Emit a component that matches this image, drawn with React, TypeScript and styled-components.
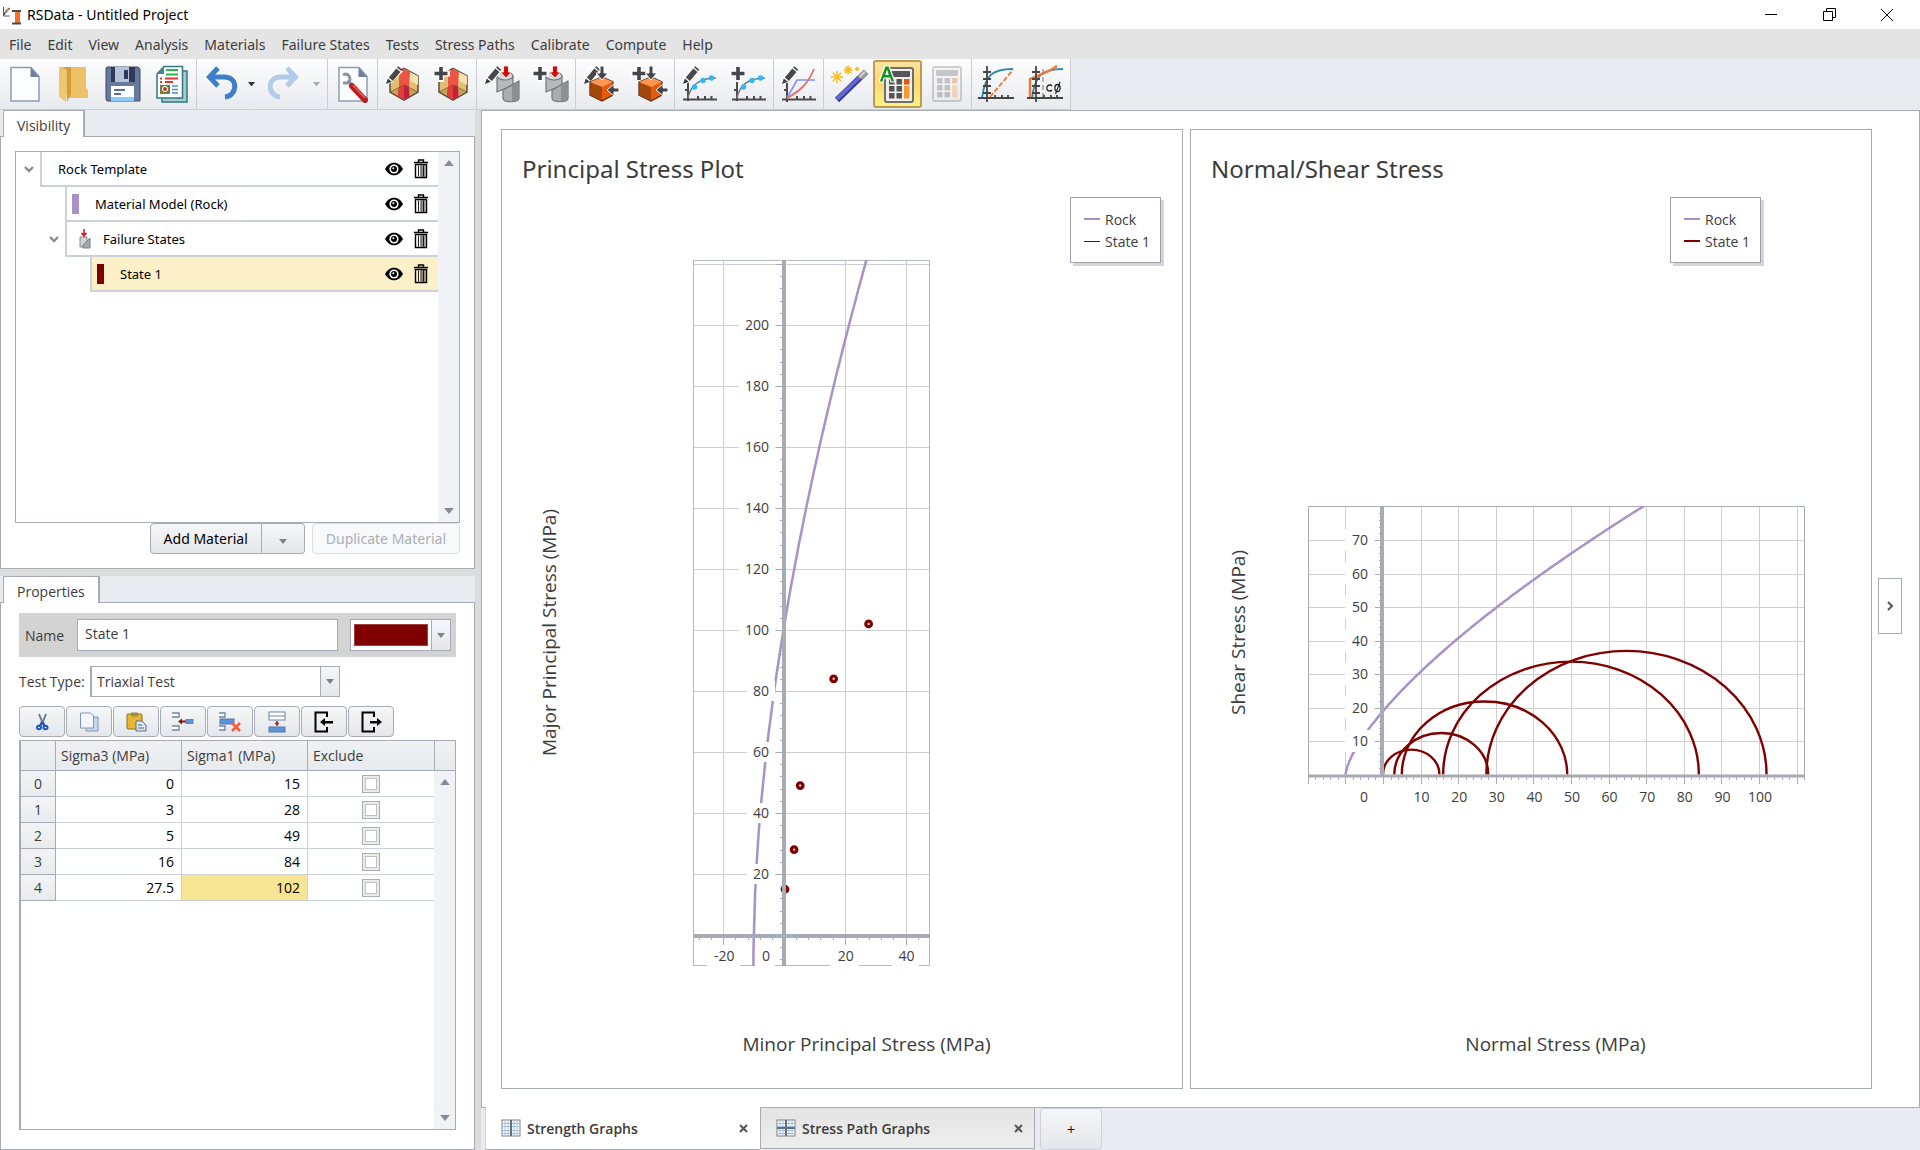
import React from "react";
import styled, { createGlobalStyle, css } from "styled-components";

const line = "#a6abb6";
const softLine = "#cdd1d9";
const strip = "#e8ebf0";
const ink = "#3c3c3c";
const maroon = "#800000";
const lilac = "#a892c6";
const wideFont = '"Noto Sans", "Open Sans", sans-serif';

const GlobalStyle = createGlobalStyle`
  *, *::before, *::after { box-sizing: border-box; }
  body { margin: 0; }
  body, button, input, select, table {
    font-family: "Open Sans", "Noto Sans", sans-serif;
    font-size: 14px;
    color: ${ink};
  }
`;

const Window = styled.div`
  display: flex;
  flex-direction: column;
  height: 100vh;
  background: #dcdcdc;
  overflow: hidden;
`;

const TitleBar = styled.header`
  display: flex;
  align-items: center;
  height: 29px;
  padding: 0 4px 0 2px;
  background: #fff;
`;

const WindowTitle = styled.h1`
  flex: 1;
  margin: 0 0 0 5px;
  font-family: ${wideFont};
  font-size: 14px;
  font-weight: 400;
  color: #000;
`;

const CaptionButton = styled.button`
  display: grid;
  place-items: center;
  width: 58px;
  height: 28px;
  padding: 0;
  border: 0;
  background: none;
`;

const MenuBar = styled.nav`
  display: flex;
  align-items: center;
  gap: 16px;
  height: 30px;
  padding: 0 9px;
  background: #e4e4e4;
`;

const MenuLink = styled.a`
  font-family: ${wideFont};
  color: ${ink};
  text-decoration: none;
  white-space: nowrap;
`;

const ToolBar = styled.div`
  display: flex;
  height: 51px;
  background: ${strip};
`;

const ToolGroup = styled.div`
  display: flex;
  align-items: center;
  border-right: 1px solid #c9cdd4;
  border-bottom: 1px solid #c9cdd4;
  background: linear-gradient(#fdfdfe, #e7eaee);
`;

const ToolButton = styled.button<{ $active?: boolean }>`
  display: grid;
  place-items: center;
  width: 49px;
  height: 48px;
  padding: 0;
  border: 2px solid transparent;
  border-radius: 3px;
  background: none;
  ${(p) =>
    p.$active &&
    css`
      border-color: #c09a4e;
      background: linear-gradient(#fce3a0, #fdd873 50%, #fff283);
    `}
`;

const MoreButton = styled.button<{ $dim?: boolean }>`
  display: grid;
  place-items: center;
  width: 16px;
  height: 48px;
  padding: 0 5px 0 0;
  border: 0;
  background: none;
  color: ${(p) => (p.$dim ? "#aaadb3" : "#333")};
`;

const Workspace = styled.div`
  display: flex;
  flex: 1;
  gap: 6px;
  min-height: 0;
`;

const Sidebar = styled.aside`
  display: flex;
  flex: 0 0 475px;
  flex-direction: column;
  gap: 7px;
`;

const Dock = styled.section<{ $grow?: boolean }>`
  display: flex;
  flex-direction: column;
  flex: ${(p) => (p.$grow ? "1" : "0 0 459px")};
  min-height: 0;
  background: ${strip};
`;

const DockTab = styled.h2`
  align-self: flex-start;
  height: 27px;
  margin: 0 0 -1px 3px;
  padding: 0 13px;
  border: 1px solid ${line};
  border-right-width: 2px;
  border-bottom: 0;
  background: #fff;
  font-size: 14px;
  font-weight: 400;
  line-height: 29px;
  z-index: 1;
`;

const DockBody = styled.div<{ $pad: string }>`
  display: flex;
  flex: 1;
  flex-direction: column;
  min-height: 0;
  padding: ${(p) => p.$pad};
  border: 1px solid ${line};
  background: #fff;
`;

const TreeBox = styled.div`
  display: flex;
  flex: 1;
  border: 1px solid ${line};
`;

const Tree = styled.ul`
  flex: 1;
  margin: 0;
  padding: 0;
  list-style: none;
`;

const TreeItem = styled.li<{ $depth: number }>`
  display: flex;
  height: 35px;
  padding-left: ${(p) => p.$depth * 25}px;
`;

const Twisty = styled.button`
  display: grid;
  place-items: center;
  width: 24px;
  padding: 0 0 0 2px;
  border: 0;
  background: none;
`;

const TreeRow = styled.div<{ $selected?: boolean }>`
  display: flex;
  flex: 1;
  align-items: center;
  padding: 0 10px 0 5px;
  border-left: 2px solid ${softLine};
  border-bottom: 2px solid ${softLine};
  background: ${(p) => (p.$selected ? "#fcf0c8" : "#fff")};
`;

const ColorChip = styled.span<{ $color: string }>`
  width: 7px;
  height: 20px;
  background: ${(p) => p.$color};
`;

const TreeLabel = styled.span<{ $gap: number }>`
  flex: 1;
  padding-left: ${(p) => p.$gap}px;
  font-family: ${wideFont};
  font-size: 13px;
  color: #000;
`;

const RowButton = styled.button`
  display: grid;
  place-items: center;
  margin-left: 11px;
  padding: 0;
  border: 0;
  background: none;
`;

const ScrollTrack = styled.div`
  display: flex;
  flex: 1;
  flex-direction: column;
  justify-content: space-between;
  align-items: center;
  width: 21px;
  padding: 8px 0;
  background: #f1f2f5;
  color: #858b98;
`;

const TreeActions = styled.div`
  display: flex;
  justify-content: flex-end;
  gap: 7px;
  height: 31px;
`;

const face = css`
  border: 1px solid ${line};
  background: linear-gradient(#f5f6f8, #e4e7ea);
`;

const SplitButton = styled.div`
  display: flex;
`;

const PushButton = styled.button<{ $side?: "left" | "right" }>`
  ${face}
  height: 31px;
  padding: 0 ${(p) => (p.$side === "right" ? 17 : 13)}px;
  border-radius: ${(p) =>
    p.$side === "left" ? "4px 0 0 4px" : p.$side === "right" ? "0 4px 4px 0" : "4px"};
  ${(p) => p.$side === "right" && "border-left: 0;"}
  color: ${(p) => (p.$side === "right" ? "#7d828d" : "#000")};
  font-family: ${wideFont};
  white-space: nowrap;

  &:disabled {
    border-color: #dcdfe3;
    background: #f8f9fa;
    color: #abafb5;
  }
`;

const NameBar = styled.div`
  display: flex;
  align-items: center;
  height: 44px;
  padding: 0 5px 0 6px;
  background: #d3d3d3;
`;

const NameLabel = styled.label`
  width: 52px;
`;

const NameInput = styled.input`
  flex: 1;
  min-width: 0;
  height: 32px;
  margin-right: 12px;
  padding: 0 7px 4px;
  border: 1px solid ${line};
  background: #fff;
`;

const ColorPicker = styled.button`
  display: flex;
  width: 101px;
  height: 32px;
  padding: 0;
  border: 1px solid ${line};
  background: #fff;
`;

const Swatch = styled.span`
  flex: 1;
  height: 22px;
  margin: 4px 3px;
  border: 1px solid #a04040;
  background: ${maroon};
`;

const DropFace = styled.span`
  ${face}
  display: grid;
  place-items: center;
  width: 19px;
  height: 100%;
  border-width: 0 0 0 1px;
  color: #7d828d;
`;

const TestRow = styled.div`
  display: flex;
  align-items: center;
  height: 31px;
  margin: 9px 0;
`;

const TestLabel = styled.label`
  width: 71px;
  white-space: nowrap;
`;

const SelectBox = styled.div`
  position: relative;
  width: 250px;
  height: 31px;
`;

const TypeSelect = styled.select`
  width: 100%;
  height: 100%;
  padding: 0 26px 0 5px;
  border: 1px solid ${line};
  border-left-width: 2px;
  border-radius: 0;
  background: #fff;
  appearance: none;
`;

const SelectArrow = styled.span`
  position: absolute;
  top: 1px;
  right: 1px;
  bottom: 1px;
  pointer-events: none;
`;

const GridTools = styled.div`
  display: flex;
  gap: 1px;
  margin-bottom: 3px;
`;

const GridTool = styled.button`
  ${face}
  display: grid;
  place-items: center;
  width: 46px;
  height: 31px;
  padding: 0;
  border-radius: 4px;
`;

const SheetBox = styled.div`
  display: flex;
  flex: 1;
  min-height: 0;
  border: 1px solid ${line};
  border-left-width: 2px;
`;

const SheetMain = styled.div`
  flex: 1;
`;

const Sheet = styled.table`
  width: 100%;
  table-layout: fixed;
  border-collapse: separate;
  border-spacing: 0;
`;

const HeadCell = styled.th<{ $w?: number }>`
  width: ${(p) => (p.$w ? `${p.$w}px` : "auto")};
  height: 30px;
  padding: 0 5px;
  border-right: 1px solid ${line};
  border-bottom: 1px solid ${line};
  background: linear-gradient(#eff1f3, #e8ebee);
  font-weight: 400;
  text-align: left;
  &:last-child { border-right: 0; }
`;

const IndexCell = styled.th`
  height: 26px;
  padding: 0;
  border-right: 1px solid ${line};
  border-bottom: 1px solid ${line};
  background: linear-gradient(#f2f4f6, #e9ecef);
  font-weight: 400;
`;

const ValueCell = styled.td<{ $selected?: boolean }>`
  height: 26px;
  padding: 0 7px;
  border-right: 1px solid ${softLine};
  border-bottom: 1px solid ${softLine};
  background: ${(p) => (p.$selected ? "#f8e594" : "#fff")};
  color: #000;
  line-height: 20px;
  text-align: right;
`;

const CheckCell = styled.td`
  height: 26px;
  padding: 0;
  border-bottom: 1px solid ${softLine};
  text-align: center;
`;

const Check = styled.input`
  display: block;
  width: 18px;
  height: 18px;
  margin: 0 auto;
  border: 1px solid #a9adb5;
  background: #fff;
  box-shadow: inset 0 0 0 2px #ececec, inset 0 0 0 3px #bfc1c6;
  appearance: none;
`;

const SheetScroll = styled.div`
  display: flex;
  flex-direction: column;
`;

const ScrollHead = styled.div`
  width: 21px;
  height: 30px;
  border-left: 1px solid ${line};
  border-bottom: 1px solid ${line};
  background: linear-gradient(#eff1f3, #e8ebee);
`;

const Main = styled.main`
  display: flex;
  flex: 1;
  flex-direction: column;
  min-width: 0;
  background: ${strip};
`;

const Canvas = styled.div`
  display: flex;
  flex: 1;
  align-items: center;
  min-height: 0;
  padding: 18px 17px 18px 19px;
  border: 1px solid ${line};
  background: #fff;
`;

const Cards = styled.div`
  display: flex;
  flex: 1;
  align-self: stretch;
  gap: 7px;
  margin-right: 6px;
`;

const Card = styled.section`
  display: flex;
  flex: 1;
  flex-direction: column;
  padding: 20px 10px 32px 20px;
  border: 1px solid ${line};
`;

const CardTitle = styled.h2`
  margin: 0 0 9px;
  font-family: ${wideFont};
  font-size: 24px;
  font-weight: 400;
  line-height: 38px;
`;

const PlotGrid = styled.div`
  display: grid;
  flex: 1;
  grid-template-columns: 24px 1fr;
  grid-template-rows: 1fr 24px;
  row-gap: 8px;
  padding-left: 15px;
`;

const AxisTitleY = styled.div`
  justify-self: center;
  align-self: center;
  margin-top: 44px;
  font-size: 19px;
  line-height: 24px;
  writing-mode: vertical-rl;
  transform: rotate(180deg);
  white-space: nowrap;
`;

const AxisTitleX = styled.div`
  grid-column: 2;
  font-size: 19px;
  line-height: 24px;
  text-align: center;
`;

const PlotArea = styled.div<{ $pad: string }>`
  position: relative;
  display: flex;
  align-items: center;
  justify-content: center;
  padding: ${(p) => p.$pad};
`;

const PlotSvg = styled.svg`
  display: block;
  font-size: 14px;
`;

const Legend = styled.ul<{ $right: number }>`
  position: absolute;
  top: 0;
  right: ${(p) => p.$right}px;
  width: 91px;
  margin: 0;
  padding: 10px 0 10px 13px;
  border: 1px solid #9da1ab;
  background: #fff;
  box-shadow: 3px 3px 0 #d6d6d8;
  list-style: none;
`;

const LegendRow = styled.li<{ $color: string; $thin?: boolean }>`
  display: flex;
  align-items: center;
  gap: 5px;
  height: 22px;
  &::before {
    content: "";
    width: 16px;
    height: ${(p) => (p.$thin ? 1 : 2)}px;
    background: ${(p) => p.$color};
  }
`;

const SideToggle = styled.button`
  display: grid;
  place-items: center;
  width: 24px;
  height: 56px;
  margin-bottom: 6px;
  padding: 0;
  border: 1px solid ${line};
  background: #fff;
`;

const TabStrip = styled.div`
  display: flex;
  height: 42px;
  padding-left: 4px;
`;

const DocTab = styled.div<{ $active?: boolean }>`
  display: flex;
  align-items: center;
  width: 275px;
  height: ${(p) => (p.$active ? 43 : 41)}px;
  margin-top: ${(p) => (p.$active ? -1 : 0)}px;
  padding: 0 10px 0 15px;
  border: 1px solid ${line};
  border-top: 0;
  background: ${(p) => (p.$active ? "#fff" : "linear-gradient(#e4e4e4, #eeeeee)")};
  ${(p) => p.$active && "border-color: #fff #fff " + line + " " + softLine + ";"}
`;

const TabName = styled.button`
  flex: 1;
  padding: 0 0 0 6px;
  border: 0;
  background: none;
  font-weight: 600;
  text-align: left;
`;

const TabClose = styled.button`
  display: grid;
  place-items: center;
  width: 12px;
  height: 16px;
  padding: 0;
  border: 0;
  background: none;
`;

const AddTab = styled.button`
  ${face}
  width: 62px;
  height: 42px;
  margin-left: 5px;
  padding: 0;
  border-color: ${softLine};
  border-radius: 4px;
  color: #000;
  font-size: 14px;
`;

/* ---------- small glyphs ---------- */

const Caret = ({ size = 8, up = false }: { size?: number; up?: boolean }) => (
  <svg width={size} height={size / 2 + 1} viewBox="0 0 8 5" aria-hidden="true">
    <path d={up ? "M0 5L4 0L8 5Z" : "M0 0L4 5L8 0Z"} fill="currentColor" />
  </svg>
);

const Chevron = () => (
  <svg width="10" height="7" viewBox="0 0 10 7" fill="none" stroke="#858b98" strokeWidth="2.400">
    <path d="M1 1L5 5L9 1" />
  </svg>
);

const Eye = () => (
  <svg width="18" height="14" viewBox="0 0 18 14">
    <path d="M0 7C3 2 6 .8 9 .8S15 2 18 7C15 12 12 13.2 9 13.2S3 12 0 7Z" fill="#000" />
    <circle cx="9" cy="7" r="4.6" fill="#fff" />
    <circle cx="9" cy="7" r="3" fill="#000" />
    <circle cx="8.4" cy="6.3" r="1" fill="#fff" />
  </svg>
);

const Trash = () => (
  <svg width="14" height="20" viewBox="0 0 14 20">
    <path d="M0 3.500h14M4.500 3V1h5v2" fill="none" stroke="#000" strokeWidth="1.400" />
    <path d="M1.500 5.500h11V18.500H1.500Z" fill="none" stroke="#000" strokeWidth="1.400" />
    <path d="M4.500 6.500v11M7 6.500v11M9.500 6.500v11" stroke="#222" strokeWidth="1" />
    <path d="M7.500 6h4v12h-4Z" fill="#000" opacity=".4" />
  </svg>
);

const AppLogo = () => (
  <svg width="20" height="20" viewBox="0 0 20 20" fill="none">
    <path d="M1.500 2v9h6M2 10L8 3M2 10C3 6 5 4 7 3" stroke="#555" strokeWidth="1" />
    <path d="M4 7l2-3 2-1" stroke="#f26a1b" strokeDasharray="2 1" />
    <path d="M13 7h5v11h-5z" fill="#fb6e1e" />
    <path d="M10 6h9M10 18.500h9" stroke="#4c4c4c" strokeWidth="2" />
  </svg>
);

/* ---------- toolbar icons ---------- */

const Icon = ({ children }: { children: React.ReactNode }) => (
  <svg width="38" height="38" viewBox="0 0 38 38" fill="none" aria-hidden="true">
    {children}
  </svg>
);

const Pencil = () => (
  <g>
    <path d="M1 20l2-7L13 1.500l6 5L8 17.500Z" fill="#fff" />
    <path d="M2 19l1.800-5.500 4 3.200Z" fill="#3d3d3d" />
    <path d="M4.800 12.500l7.500-9 4.200 3.500-7.600 9Z" fill="#484848" />
    <path d="M13 2.600l1.200-1.400 4.200 3.500-1.200 1.400Z" fill="#484848" />
  </g>
);

const Plus = () => (
  <g>
    <path d="M8 0v17M-1 8.500h18" stroke="#fff" strokeWidth="6" />
    <path d="M8 2v13M1.500 8.500h13" stroke="#43454c" strokeWidth="3.600" />
  </g>
);

const RedArrow = ({ x = 23 }: { x?: number }) => (
  <path d={`M${x - 2.500} 1h5v6h3l-5.500 6l-5.500-6h3Z`} fill="#d40b0b" stroke="#fff" strokeWidth=".8" />
);

const Hexagon = () => (
  <g strokeLinejoin="round">
    <path d="M20 3.500L34 11V27L20 35L6 27V11Z" fill="#e2bd72" stroke="#5a4a3a" strokeWidth="1.500" />
    <path d="M20 4L34 11V20L20 13Z" fill="#f3e2b0" />
    <path d="M6.500 26.500L20 20L33.500 26.500L20 34.500Z" fill="#c9a055" />
    <path d="M15 6L20 4L26 7L25 21L15 22Z" fill="#ee5443" />
    <path d="M15 22L20 20L25 21L25.500 31.500L20 34.500L14 31Z" fill="#c4203a" />
    <path d="M15 22L20 20V34.500L14 31Z" fill="#e23c3c" />
    <path d="M6 27L20 20L34 27" stroke="#7a5c32" strokeWidth=".7" />
  </g>
);

const Cylinder = () => (
  <g stroke="#737778" strokeWidth="1.200" strokeLinejoin="round">
    <path d="M14 11V27L30 20V11Z" fill="#b5b9ba" />
    <ellipse cx="22" cy="11" rx="8" ry="4" fill="#d7d9da" />
    <path d="M20 25L36 16V33C36 38 20 38 20 33Z" fill="#a9adae" />
    <path d="M29 21L35.500 17V33C35 35 33 36 29 36Z" fill="#8b9091" stroke="none" />
  </g>
);

const Cube = () => (
  <g>
    <path d="M8 17L20 12L31 17V30L20 36L8 30Z" fill="#e65a0a" stroke="#5f2d0e" strokeWidth="1.300" />
    <path d="M8 17L20 12L31 17L20 22Z" fill="#fb9552" />
    <path d="M8.500 17.500L20 22V35.500L8.500 30Z" fill="#a5460c" />
    <path d="M18 1h4v7h4l-6 7l-6-7h4Z" fill="#43454c" stroke="#fff" strokeWidth="1" />
    <path d="M25 25l7-6v4h5v4h-5v4Z" fill="#43454c" stroke="#fff" strokeWidth="1" />
  </g>
);

const Points = () => (
  <g>
    <path d="M7 15v21M2 34.500h34M17 31v3M24 31v3M30.500 31v3M4 25h3" stroke="#4a4a4a" strokeWidth="2" />
    <path d="M7 33Q11 13 35 13" stroke="#777" strokeWidth="1.500" />
    <circle cx="13.500" cy="22" r="2.700" fill="#2fb9fb" />
    <circle cx="22" cy="15.500" r="2.700" fill="#2fb9fb" />
    <circle cx="30.500" cy="13" r="2.700" fill="#2fb9fb" />
  </g>
);

const Calculator = ({ dim = false }: { dim?: boolean }) => (
  <g opacity={dim ? 0.3 : 1}>
    <rect x="5" y="2" width="28" height="34" rx="2" fill="#eeeeee" stroke="#6e6e6e" strokeWidth="2" />
    <rect x="8" y="5" width="22" height="6" rx="1" fill="#555" />
    {[13, 20, 27].map((y) => (
      <g key={y}>
        <rect x="9" y={y} width="5.500" height="5.500" fill="#555" />
        <rect x="16.500" y={y} width="5.500" height="5.500" fill="#555" />
        <rect x="24" y={y} width="5.500" height={y === 20 ? 8 : 5.500} fill={y === 13 ? "#e2580c" : "#f49a33"} />
      </g>
    ))}
  </g>
);

const GraphAxes = () => (
  <path d="M9 1v36M0 33h36M5 7h8M5 14h8M5 21h8M5 28h8M17 30v3M24 30v3M30 30v3" stroke="#454545" strokeWidth="1.800" />
);

const NewIcon = () => (
  <Icon>
    <path d="M5 2.500h20l8 9V36H5Z" fill="#fcfdfe" stroke="#8c9cb8" strokeWidth="1.500" />
    <path d="M24.500 2v10H33Z" fill="#6f819f" />
  </Icon>
);

const OpenIcon = () => (
  <Icon>
    <path d="M4 2h27v21l2 2v8H12Z" fill="#edc168" />
    <path d="M8 2h8v27l-4 8V5Z" fill="#d69b3c" />
    <path d="M4 2l7 4v31l-7-5Z" fill="#f0c670" />
  </Icon>
);

const SaveIcon = () => (
  <Icon>
    <path d="M3 2h31l2 2v32H3L2 34V3Z" fill="#667a9e" stroke="#3c4a69" />
    <rect x="7" y="2" width="24" height="15" fill="#30395a" />
    <rect x="11" y="2" width="14" height="15" fill="#b5c3dd" />
    <rect x="20" y="5" width="4" height="9" fill="#30395a" />
    <rect x="7" y="21" width="23" height="15" fill="#fff" />
    <rect x="7" y="32" width="23" height="4" fill="#8dcaf7" />
    <path d="M10 25h11M10 29h7" stroke="#5d7090" strokeWidth="2" />
  </Icon>
);

const ReportIcon = () => (
  <Icon>
    <path d="M9 6h25v31H9Z" fill="#a5cdd0" stroke="#33777f" strokeWidth="1.500" />
    <path d="M11 1.500h18.500V33H4V9Z" fill="#fff" stroke="#33777f" strokeWidth="1.500" />
    <path d="M4 9L11 1.500V9Z" fill="#3d8b8a" />
    <path d="M13 5h12M13 9.500h12" stroke="#27b648" strokeWidth="1.800" />
    <path d="M7 13.500h2M12 13.500h13M7 17h2M12 17h8" stroke="#ea3434" strokeWidth="1.800" />
    <rect x="7" y="20" width="10" height="9" fill="#7b7c36" />
    <path d="M12 21v6M9 24h6" stroke="#fff" strokeWidth="3" />
    <path d="M12 22v4M10 24h4" stroke="#d02020" strokeWidth="1.600" />
    <path d="M19 21h6M19 24.500h6M19 28h6" stroke="#4a8fe0" strokeWidth="1.500" />
  </Icon>
);

const TurnArrow = ({ flip = false, color }: { flip?: boolean; color: string }) => (
  <Icon>
    <g transform={flip ? "matrix(-1 0 0 1 34 0)" : undefined}>
      <path d="M8 12H22C36 13 34 31 22 32" stroke={color} strokeWidth="5" />
      <path d="M15 3L6.500 12L15 21" stroke={color} strokeWidth="5" />
    </g>
  </Icon>
);

const WrenchIcon = () => (
  <Icon>
    <path d="M5 2.500h20l8 9V36H5Z" fill="#fcfdfe" stroke="#8c9cb8" strokeWidth="1.500" />
    <path d="M24.500 2v10H33Z" fill="#6f819f" />
    <path d="M9 10c6-3 9 4 5 8h-5M14 15l6 8" stroke="#8f9499" strokeWidth="3" />
    <path d="M18 21L31 35" stroke="#b81f1f" strokeWidth="6" strokeLinecap="round" />
    <path d="M19 20L31 33" stroke="#e4504b" strokeWidth="2" />
  </Icon>
);

const BlendIcon = () => (
  <Icon>
    <path d="M7 17v20M2 34.500h34M17 31v3M24 31v3M30.500 31v3M4 25h3" stroke="#4a4a4a" strokeWidth="2" />
    <path d="M7 33L17 15H35" stroke="#7d93f5" strokeWidth="1.600" />
    <path d="M7 33C20 26 28 19 34 4" stroke="#e5706c" strokeWidth="1.800" />
    <Pencil />
  </Icon>
);

const Star = ({ x, y, r }: { x: number; y: number; r: number }) => (
  <path
    d={`M${x} ${y - r}v${2 * r}M${x - r} ${y}h${2 * r}M${x - r * 0.7} ${y - r * 0.7}l${r * 1.4} ${r * 1.4}M${x + r * 0.7} ${y - r * 0.7}l${-r * 1.4} ${r * 1.4}`}
    stroke="#f9be1d"
    strokeWidth="1.500"
  />
);

const WandIcon = () => (
  <Icon>
    <path d="M7 35L36 7" stroke="#3a3a8a" strokeWidth="6" />
    <path d="M7 34L31 11" stroke="#6667d8" strokeWidth="3.500" />
    <path d="M30 13L36 7" stroke="#9a9a9a" strokeWidth="6" />
    <path d="M29.500 12L35 6.500" stroke="#d8d8d8" strokeWidth="2" />
    <Star x={7} y={12} r={6} />
    <Star x={18} y={5} r={4.5} />
    <Star x={27} y={4} r={2} />
  </Icon>
);

const AutoCalcIcon = () => (
  <Icon>
    <g transform="translate(1 1)">
      <Calculator />
    </g>
    <path d="M0 17L6 1h4l6 16h-4l-1.200-4H5.200L4 17Z" fill="#12911c" stroke="#fff" strokeWidth="1.200" />
    <path d="M6.200 10h3.600L8 4.500Z" fill="#fff" />
  </Icon>
);

const EnvelopeIcon = () => (
  <Icon>
    <path d="M4 33C7 10 14 4 35 4" stroke="#2f87ab" strokeWidth="1.800" />
    <path d="M12 32L35 5" stroke="#f07a3a" strokeWidth="1.800" strokeDasharray="5 2" />
    <GraphAxes />
  </Icon>
);

const CohesionIcon = () => (
  <Icon>
    <path d="M5 33C8 10 15 4 36 4" stroke="#2f87ab" strokeWidth="1.800" />
    <path d="M3 32V14L22 6L30 1" stroke="#f07a3a" strokeWidth="2.500" />
    <path d="M16 4v28" stroke="#777" strokeDasharray="5 3" />
    <GraphAxes />
    <path d="M25 21a3 3 0 1 0 0 4" stroke="#222" strokeWidth="1.300" />
    <ellipse cx="30.500" cy="23" rx="2.600" ry="3.500" stroke="#222" strokeWidth="1.300" />
    <path d="M28.500 29L33 17" stroke="#222" strokeWidth="1.200" />
  </Icon>
);

const toolGroups: { label: string; icon: React.ReactNode; active?: boolean; more?: "on" | "dim" }[][] = [
  [
    { label: "New", icon: <NewIcon /> },
    { label: "Open", icon: <OpenIcon /> },
    { label: "Save", icon: <SaveIcon /> },
    { label: "Report", icon: <ReportIcon /> },
  ],
  [
    { label: "Undo", icon: <TurnArrow color="#3d7ec9" />, more: "on" },
    { label: "Redo", icon: <TurnArrow flip color="#b1cbe8" />, more: "dim" },
  ],
  [{ label: "Project settings", icon: <WrenchIcon /> }],
  [
    { label: "Edit material", icon: <Icon><Hexagon /><Pencil /></Icon> },
    { label: "Add material", icon: <Icon><Hexagon /><Plus /></Icon> },
  ],
  [
    { label: "Edit failure state", icon: <Icon><Cylinder /><RedArrow /><Pencil /></Icon> },
    { label: "Add failure state", icon: <Icon><Cylinder /><Plus /><RedArrow /></Icon> },
  ],
  [
    { label: "Edit test", icon: <Icon><Pencil /><Cube /></Icon> },
    { label: "Add test", icon: <Icon><Plus /><Cube /></Icon> },
  ],
  [
    { label: "Edit stress path", icon: <Icon><Points /><Pencil /></Icon> },
    { label: "Add stress path", icon: <Icon><Points /><Plus /></Icon> },
  ],
  [{ label: "Edit calibration", icon: <BlendIcon /> }],
  [
    { label: "Wizard", icon: <WandIcon /> },
    { label: "Auto compute", icon: <AutoCalcIcon />, active: true },
    { label: "Compute", icon: <Icon><Calculator dim /></Icon> },
  ],
  [
    { label: "Envelope", icon: <EnvelopeIcon /> },
    { label: "Cohesion and friction", icon: <CohesionIcon /> },
  ],
];

/* ---------- sheet tool icons ---------- */

const Small = ({ children }: { children: React.ReactNode }) => (
  <svg width="22" height="22" viewBox="0 0 22 22" fill="none" aria-hidden="true">
    {children}
  </svg>
);

const sheetTools: { label: string; icon: React.ReactNode }[] = [
  {
    label: "Cut",
    icon: (
      <Small>
        <path d="M8 3l4 10M15 3l-4 10" stroke="#6d7f98" strokeWidth="2" />
        <path d="M11 11l-2 4M11.500 11l2 4" stroke="#2457b8" strokeWidth="2.500" />
        <ellipse cx="8" cy="16.500" rx="2" ry="1.800" stroke="#2457b8" strokeWidth="2" />
        <ellipse cx="14.500" cy="16.500" rx="2" ry="1.800" stroke="#2457b8" strokeWidth="2" />
      </Small>
    ),
  },
  {
    label: "Copy",
    icon: (
      <Small>
        <path d="M8 6h12v14H8Z" fill="#c9d8ec" stroke="#8094b8" />
        <path d="M2.500 2h10l3 3v12h-13Z" fill="#f3f6fb" stroke="#8094b8" />
      </Small>
    ),
  },
  {
    label: "Paste",
    icon: (
      <Small>
        <rect x="2" y="3" width="15" height="15" rx="1" fill="#e9b62f" stroke="#94701c" />
        <rect x="6" y="1.500" width="7" height="4" fill="#a38b4c" />
        <path d="M11 10h6l4 4v6H11Z" fill="#d9e3f0" stroke="#5c6e8b" />
        <path d="M13 14h4M13 17h6" stroke="#5c6e8b" />
      </Small>
    ),
  },
  {
    label: "Insert row",
    icon: (
      <Small>
        <path d="M0 2h7v4H0M0 15h7v4H0" fill="#fff" stroke="#6e84a5" strokeWidth="1.300" />
        <path d="M6 10.500l4-3v2h4v2h-4v2Z" fill="#8b1010" />
        <rect x="14" y="8.500" width="7" height="4" fill="#5b93df" stroke="#6e84a5" />
      </Small>
    ),
  },
  {
    label: "Delete row",
    icon: (
      <Small>
        <path d="M0 2h6v4H0M0 15h6v4H0" fill="#fff" stroke="#6e84a5" strokeWidth="1.300" />
        <rect x="1" y="8" width="14" height="5" fill="#5b93df" stroke="#5a78a8" />
        <path d="M13 12l8 8M21 12l-8 8" stroke="#ff5a3c" strokeWidth="2.500" />
      </Small>
    ),
  },
  {
    label: "Append row",
    icon: (
      <Small>
        <rect x="3" y="1" width="16" height="8" fill="#fff" stroke="#6e84a5" />
        <path d="M3 5h16" stroke="#6e84a5" />
        <path d="M11 15v-5M9 12.500h4" stroke="#b01515" strokeWidth="1.500" />
        <rect x="3" y="16" width="16" height="5" fill="#5b93df" stroke="#5a78a8" />
      </Small>
    ),
  },
  {
    label: "Import",
    icon: (
      <Small>
        <path d="M14 6V1.500H2.500V20.500H14V16" stroke="#000" strokeWidth="2" />
        <path d="M7 11l5-4v3h8v2.400h-8V15Z" fill="#000" />
      </Small>
    ),
  },
  {
    label: "Export",
    icon: (
      <Small>
        <path d="M14 6V1.500H2.500V20.500H14V16" stroke="#000" strokeWidth="2" />
        <path d="M22 11l-5-4v3h-7v2.400h7V15Z" fill="#000" />
      </Small>
    ),
  },
];

const LayoutIcon = ({ rows }: { rows: number }) => (
  <svg width="20" height="18" viewBox="0 0 20 18" fill="none" aria-hidden="true">
    <rect x="1" y="1" width="18" height="16" fill="#fff" stroke="#7b7f86" />
    <path d="M4 1v16M7 1v16M13 1v16M16 1v16M1 4.500h18M1 7.500h18M1 11.500h18M1 14.500h18" stroke="#9fc0e2" />
    <path d="M10 1v16" stroke="#6b6f75" strokeWidth="2" />
    {rows > 1 && <path d="M1 9h18" stroke="#6b6f75" strokeWidth="2" />}
  </svg>
);

/* ---------- data ---------- */

type Sample = { sigma3: number; sigma1: number };

const samples: Sample[] = [
  { sigma3: 0, sigma1: 15 },
  { sigma3: 3, sigma1: 28 },
  { sigma3: 5, sigma1: 49 },
  { sigma3: 16, sigma1: 84 },
  { sigma3: 27.5, sigma1: 102 },
];

const toPath = (points: [number, number][]) =>
  points.map(([x, y], i) => `${i ? "L" : "M"}${x.toFixed(1)} ${y.toFixed(1)}`).join("");

const range = (from: number, to: number, step: number) => {
  const out: number[] = [];
  for (let v = from; v <= to; v += step) out.push(v);
  return out;
};

/* Principal stress: Hoek-Brown envelope with the measured samples. */
const PrincipalPlot = () => {
  const w = 237;
  const h = 706;
  const X = (v: number) => 91 + v * 3.04;
  const Y = (v: number) => 675 - v * 3.05;
  const curve = toPath([
    [X(-10.05), h],
    ...range(-10.02, 28, 0.5).map((s): [number, number] => [X(s), Y(s + Math.sqrt(Math.max(0, 10201 + 1015 * s)))]),
  ]);
  return (
    <PlotSvg width={w} height={h} viewBox={`0 0 ${w} ${h}`} role="img" aria-label="Principal stress plot">
      <defs>
        <clipPath id="principal-clip"><rect width={w} height={h} /></clipPath>
      </defs>
      <g stroke="#cfcfd1" strokeWidth="1">
        {[-20, 20, 40].map((v) => <path key={v} d={`M${Math.round(X(v)) + 0.5} 0V${h}`} />)}
        {range(20, 220, 20).map((v) => <path key={v} d={`M0 ${Math.round(Y(v)) + 0.5}H${w}`} />)}
      </g>
      <rect x=".5" y=".5" width={w - 1} height={h - 1} fill="none" stroke="#b4b8c0" />
      <path d={curve} fill="none" stroke={lilac} strokeWidth="2.500" clipPath="url(#principal-clip)" />
      <g fill="#fff">
        {range(20, 200, 20).map((v) => (
          <rect key={v} x={v < 100 ? 54 : 46} y={Y(v) - 10} width={v < 100 ? 28 : 36} height="20" />
        ))}
        <rect x="14" y="686" width="33" height="20" />
        <rect x="62" y="686" width="20" height="20" />
        <rect x="137" y="686" width="29" height="20" />
        <rect x="199" y="686" width="27" height="20" />
      </g>
      {samples.map((s) => (
        <circle key={s.sigma3} cx={X(s.sigma3) + 1} cy={Y(s.sigma1)} r="2.800" fill="#e6cccc" stroke={maroon} strokeWidth="3.200" />
      ))}
      <g stroke={line}>
        <path d={`M91 0V${h}`} strokeWidth="4" />
        <path d={`M0 676H${w}`} strokeWidth="4" />
        {range(-8, 220, 4).map((v) => (
          <path key={v} d={`M${v % 20 ? 87 : 83} ${Math.round(Y(v)) + 0.5}H90`} />
        ))}
        {range(-28, 44, 4).map((v) => (
          <path key={v} d={`M${Math.round(X(v)) + 0.5} 676V${v % 20 ? 680 : 684}`} />
        ))}
      </g>
      <g fill={ink}>
        {range(20, 200, 20).map((v) => (
          <text key={v} x="76" y={Y(v) + 5} textAnchor="end">{v}</text>
        ))}
        <text x={X(-20) + 1} y="701" textAnchor="middle">-20</text>
        <text x="73" y="701" textAnchor="middle">0</text>
        <text x={X(20) + 1} y="701" textAnchor="middle">20</text>
        <text x={X(40) + 1} y="701" textAnchor="middle">40</text>
      </g>
    </PlotSvg>
  );
};

/* Normal/shear stress: envelope with one Mohr circle per sample. */
const ShearPlot = () => {
  const w = 497;
  const top = 271;
  const X = (v: number) => 75 + v * 3.76;
  const Y = (v: number) => 268.5 - v * 3.35;
  const curve = toPath(range(-10, 72, 0.5).map((s): [number, number] => [X(s), Y(3.8 * Math.pow(s + 10, 0.697))]));
  return (
    <PlotSvg width={w} height="300" viewBox={`0 0 ${w} 300`} role="img" aria-label="Normal and shear stress plot">
      <defs>
        <clipPath id="shear-clip"><rect width={w} height="270" /></clipPath>
      </defs>
      <g stroke="#cfcfd1">
        {range(-10, 110, 10).map((v) => <path key={v} d={`M${Math.round(X(v)) + 0.5} 0V${top}`} />)}
        {range(10, 70, 10).map((v) => <path key={v} d={`M0 ${Math.round(Y(v)) + 0.5}H${w}`} />)}
      </g>
      <path d={`M.5 ${top}V.5H${w - 0.5}V${top}`} fill="none" stroke={line} />
      <path d={curve} fill="none" stroke={lilac} strokeWidth="2.500" clipPath="url(#shear-clip)" />
      <g fill="#fff">
        {range(10, 70, 10).map((v) => <rect key={v} x="37" y={Y(v) - 11} width="30" height="22" />)}
      </g>
      <g fill="none" stroke={maroon} strokeWidth="2.400" clipPath="url(#shear-clip)">
        {samples.map((s) => {
          const r = (s.sigma1 - s.sigma3) / 2;
          return (
            <path
              key={s.sigma3}
              d={`M${X(s.sigma3)} ${Y(0)}A${r * 3.76} ${r * 3.32} 0 0 1 ${X(s.sigma1)} ${Y(0)}`}
            />
          );
        })}
      </g>
      <g stroke={line}>
        <path d={`M74 0V${top}`} strokeWidth="4" />
        <path d={`M0 270H${w}`} strokeWidth="3" />
        {range(0, 78, 2).map((v) => (
          <path key={v} d={`M${v % 10 ? 71 : 67} ${Math.round(Y(v)) + 0.5}H74`} />
        ))}
        {range(-20, 112, 2).map((v) => (
          <path key={v} d={`M${Math.max(0, Math.round(X(v))) + 0.5} 271V${v % 10 ? 274 : 278}`} />
        ))}
      </g>
      <g fill={ink}>
        {range(10, 70, 10).map((v) => <text key={v} x="60" y={Y(v) + 5} textAnchor="end">{v}</text>)}
        <text x="56" y="296" textAnchor="middle">0</text>
        {range(10, 100, 10).map((v) => <text key={v} x={X(v) + 1} y="296" textAnchor="middle">{v}</text>)}
      </g>
    </PlotSvg>
  );
};

const RowActions = () => (
  <>
    <RowButton aria-label="Show or hide"><Eye /></RowButton>
    <RowButton aria-label="Delete"><Trash /></RowButton>
  </>
);

const menus = ["File", "Edit", "View", "Analysis", "Materials", "Failure States", "Tests", "Stress Paths", "Calibrate", "Compute", "Help"];

export default function App() {
  return (
    <Window>
      <GlobalStyle />
      <TitleBar>
        <AppLogo />
        <WindowTitle>RSData - Untitled Project</WindowTitle>
        <CaptionButton aria-label="Minimize">
          <svg width="12" height="12" viewBox="0 0 12 12"><path d="M0 5.500h12" stroke="#000" /></svg>
        </CaptionButton>
        <CaptionButton aria-label="Restore">
          <svg width="13" height="13" viewBox="0 0 13 13" fill="none" stroke="#000">
            <path d="M.5 3.500h9v9h-9ZM3.500 3.500v-3h9v9h-3" />
          </svg>
        </CaptionButton>
        <CaptionButton aria-label="Close">
          <svg width="12" height="12" viewBox="0 0 12 12" stroke="#000"><path d="M0 0L12 12M12 0L0 12" /></svg>
        </CaptionButton>
      </TitleBar>
      <MenuBar>
        {menus.map((m) => <MenuLink key={m} href="#">{m}</MenuLink>)}
      </MenuBar>
      <ToolBar>
        {toolGroups.map((group, i) => (
          <ToolGroup key={i}>
            {group.map((t) => (
              <React.Fragment key={t.label}>
                <ToolButton aria-label={t.label} $active={t.active}>{t.icon}</ToolButton>
                {t.more && <MoreButton aria-label={`${t.label} history`} $dim={t.more === "dim"}><Caret size={7} /></MoreButton>}
              </React.Fragment>
            ))}
          </ToolGroup>
        ))}
      </ToolBar>

      <Workspace>
        <Sidebar>
          <Dock>
            <DockTab>Visibility</DockTab>
            <DockBody $pad="14px 14px 14px">
              <TreeBox>
                <Tree>
                  <TreeItem $depth={0}>
                    <Twisty aria-label="Collapse"><Chevron /></Twisty>
                    <TreeRow><TreeLabel $gap={11}>Rock Template</TreeLabel><RowActions /></TreeRow>
                  </TreeItem>
                  <TreeItem $depth={1}>
                    <Twisty as="span" />
                    <TreeRow><ColorChip $color={lilac} /><TreeLabel $gap={16}>Material Model (Rock)</TreeLabel><RowActions /></TreeRow>
                  </TreeItem>
                  <TreeItem $depth={1}>
                    <Twisty aria-label="Collapse"><Chevron /></Twisty>
                    <TreeRow>
                      <svg width="24" height="22" viewBox="0 0 24 22" aria-hidden="true">
                        <path d="M8 9v10h7V9Z" fill="#cfd2d3" stroke="#8a8f91" />
                        <path d="M11 17l7-7v10h-7Z" fill="#a4a9ab" stroke="#7c8183" />
                        <path d="M12 1v5M9.500 5l2.500 3l2.500-3" stroke="#d8202a" strokeWidth="1.600" fill="#d8202a" />
                      </svg>
                      <TreeLabel $gap={7}>Failure States</TreeLabel>
                      <RowActions />
                    </TreeRow>
                  </TreeItem>
                  <TreeItem $depth={2}>
                    <Twisty as="span" />
                    <TreeRow $selected><ColorChip $color={maroon} /><TreeLabel $gap={16}>State 1</TreeLabel><RowActions /></TreeRow>
                  </TreeItem>
                </Tree>
                <SheetScroll>
                  <ScrollTrack><Caret size={10} up /><Caret size={10} /></ScrollTrack>
                </SheetScroll>
              </TreeBox>
              <TreeActions>
                <SplitButton>
                  <PushButton $side="left">Add Material</PushButton>
                  <PushButton $side="right" aria-label="More material actions"><Caret size={8} /></PushButton>
                </SplitButton>
                <PushButton disabled>Duplicate Material</PushButton>
              </TreeActions>
            </DockBody>
          </Dock>

          <Dock $grow>
            <DockTab>Properties</DockTab>
            <DockBody $pad="10px 18px 19px">
              <NameBar>
                <NameLabel htmlFor="state-name">Name</NameLabel>
                <NameInput id="state-name" defaultValue="State 1" />
                <ColorPicker aria-label="State color">
                  <Swatch />
                  <DropFace><Caret size={8} /></DropFace>
                </ColorPicker>
              </NameBar>
              <TestRow>
                <TestLabel htmlFor="test-type">Test Type:</TestLabel>
                <SelectBox>
                  <TypeSelect id="test-type" defaultValue="Triaxial Test">
                    <option>Triaxial Test</option>
                  </TypeSelect>
                  <SelectArrow><DropFace><Caret size={8} /></DropFace></SelectArrow>
                </SelectBox>
              </TestRow>
              <GridTools>
                {sheetTools.map((t) => <GridTool key={t.label} aria-label={t.label}>{t.icon}</GridTool>)}
              </GridTools>
              <SheetBox>
                <SheetMain>
                  <Sheet>
                    <thead>
                      <tr>
                        <HeadCell $w={35} aria-label="Row" />
                        <HeadCell $w={126}>Sigma3 (MPa)</HeadCell>
                        <HeadCell $w={126}>Sigma1 (MPa)</HeadCell>
                        <HeadCell>Exclude</HeadCell>
                      </tr>
                    </thead>
                    <tbody>
                      {samples.map((s, i) => (
                        <tr key={i}>
                          <IndexCell>{i}</IndexCell>
                          <ValueCell>{s.sigma3}</ValueCell>
                          <ValueCell $selected={i === 4}>{s.sigma1}</ValueCell>
                          <CheckCell><Check type="checkbox" aria-label={`Exclude row ${i}`} /></CheckCell>
                        </tr>
                      ))}
                    </tbody>
                  </Sheet>
                </SheetMain>
                <SheetScroll>
                  <ScrollHead />
                  <ScrollTrack><Caret size={10} up /><Caret size={10} /></ScrollTrack>
                </SheetScroll>
              </SheetBox>
            </DockBody>
          </Dock>
        </Sidebar>

        <Main>
          <Canvas>
            <Cards>
              <Card>
                <CardTitle>Principal Stress Plot</CardTitle>
                <PlotGrid>
                  <AxisTitleY>Major Principal Stress (MPa)</AxisTitleY>
                  <PlotArea $pad="4px 111px 0 0">
                    <PrincipalPlot />
                    <Legend $right={11}>
                      <LegendRow $color={lilac}>Rock</LegendRow>
                      <LegendRow $color={maroon} $thin>State 1</LegendRow>
                    </Legend>
                  </PlotArea>
                  <AxisTitleX>Minor Principal Stress (MPa)</AxisTitleX>
                </PlotGrid>
              </Card>
              <Card>
                <CardTitle>Normal/Shear Stress</CardTitle>
                <PlotGrid>
                  <AxisTitleY>Shear Stress (MPa)</AxisTitleY>
                  <PlotArea $pad="90px 0 0 1px">
                    <ShearPlot />
                    <Legend $right={100}>
                      <LegendRow $color={lilac}>Rock</LegendRow>
                      <LegendRow $color={maroon}>State 1</LegendRow>
                    </Legend>
                  </PlotArea>
                  <AxisTitleX>Normal Stress (MPa)</AxisTitleX>
                </PlotGrid>
              </Card>
            </Cards>
            <SideToggle aria-label="Expand side panel">
              <svg width="8" height="10" viewBox="0 0 8 10" fill="none"><path d="M2 1L6 5L2 9" stroke="#555" strokeWidth="2" /></svg>
            </SideToggle>
          </Canvas>
          <TabStrip>
            {["Strength Graphs", "Stress Path Graphs"].map((name, i) => (
              <DocTab key={name} $active={i === 0}>
                <LayoutIcon rows={i + 1} />
                <TabName>{name}</TabName>
                <TabClose aria-label={`Close ${name}`}>
                  <svg width="9" height="9" viewBox="0 0 9 9"><path d="M1 1L8 8M8 1L1 8" stroke="#555" strokeWidth="2" /></svg>
                </TabClose>
              </DocTab>
            ))}
            <AddTab aria-label="Add tab">+</AddTab>
          </TabStrip>
        </Main>
      </Workspace>
    </Window>
  );
}
